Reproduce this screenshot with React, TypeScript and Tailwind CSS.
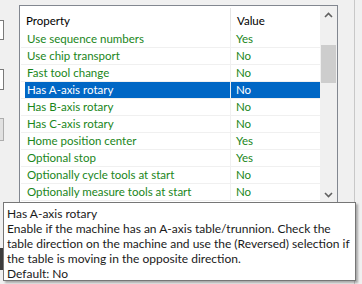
const rows: [string, string][] = [
  ['Use sequence numbers', 'Yes'],
  ['Use chip transport', 'No'],
  ['Fast tool change', 'No'],
  ['Has A-axis rotary', 'No'],
  ['Has B-axis rotary', 'No'],
  ['Has C-axis rotary', 'No'],
  ['Home position center', 'Yes'],
  ['Optional stop', 'Yes'],
  ['Optionally cycle tools at start', 'No'],
  ['Optionally measure tools at start', 'No'],
]

const selected = 3

const tooltipLines = [
  'Has A-axis rotary',
  'Enable if the machine has an A-axis table/trunnion. Check the',
  'table direction on the machine and use the (Reversed) selection if',
  'the table is moving in the opposite direction.',
  'Default: No',
]

function Chevron({ down }: { down?: boolean }) {
  return (
    <svg width="9" height="6" viewBox="0 0 9 6" className={down ? 'rotate-180' : ''}>
      <path d="M1 5 L4.5 1.5 L8 5" fill="none" stroke="#606060" strokeWidth="1.6" />
    </svg>
  )
}

export default function App() {
  return (
    <div
      className="relative w-[362px] h-[284px] overflow-hidden bg-[#f0f0f0] flex text-[11.5px] text-black"
      style={{ fontFamily: 'Lato, "Liberation Sans", sans-serif' }}
    >
      {/* clipped controls on the left */}
      <div className="w-[4px] shrink-0 flex flex-col">
        <div className="mt-[20px] h-[20px] bg-white border-y border-r border-[#7a7a7a]" />
        <div className="mt-[29px] h-[21px] bg-white border-y border-r border-[#7a7a7a]" />
        <div className="mt-[28px] h-[23px] bg-[#e1e1e1] border-y border-r border-[#adadad]" />
        <div className="mt-[107px] h-[22px] bg-[#3c3c3c]" />
      </div>

      {/* property list */}
      <div className="ml-[15px] mt-[5px] w-[319px] h-[199px] shrink-0 border border-[#828790] bg-white flex">
        <div className="flex-1 flex flex-col">
          <div className="h-[25px] flex items-center">
            <div className="w-[210px] pl-[6px] h-full flex items-center pt-[4px]">Property</div>
            <div className="w-px h-[23px] self-end bg-[#e5e5e5]" />
            <div className="pl-[6px] pt-[4px]">Value</div>
          </div>
          {rows.map(([name, value], i) => {
            const sel = i === selected
            return (
              <div key={name} className="h-[17px] flex pl-[1px]">
                <div className="flex-1 flex border-b border-[#f0f0f0]">
                  <div className="w-[4px]" />
                  <div
                    className={`w-[205px] pl-[2px] leading-[16px] whitespace-nowrap overflow-hidden ${
                      sel ? 'bg-[#0067c5] text-white' : 'text-[#1a861a]'
                    }`}
                  >
                    {name}
                  </div>
                  <div className="w-px bg-[#f0f0f0]" />
                  <div
                    className={`flex-1 pl-[5px] leading-[16px] ${
                      sel ? 'bg-[#0067c5] text-white' : 'text-[#1a861a]'
                    }`}
                  >
                    {value}
                  </div>
                </div>
              </div>
            )
          })}
        </div>

        {/* scrollbar */}
        <div className="w-[17px] bg-[#f0f0f0] flex flex-col">
          <div className="h-[17px] flex items-center justify-center">
            <Chevron />
          </div>
          <div className="flex-1 px-[1px]">
            <div className="mt-[22px] h-[38px] bg-[#cdcdcd]" />
          </div>
          <div className="h-[17px] flex items-center justify-center">
            <Chevron down />
          </div>
        </div>
      </div>

      <div className="ml-[16px] w-px h-full bg-[#c8c8c8]" />

      {/* tooltip */}
      <div className="absolute left-[3px] top-[202px] w-[353px] h-[79px] overflow-hidden bg-white border border-[#767676] shadow-[2px_2px_2px_rgba(0,0,0,0.3)] pl-[3px] pt-[3px] text-[12px] leading-[15px] text-[#1a1a1a]">
        {tooltipLines.map((line) => (
          <div key={line} className="whitespace-nowrap">
            {line}
          </div>
        ))}
      </div>
    </div>
  )
}
